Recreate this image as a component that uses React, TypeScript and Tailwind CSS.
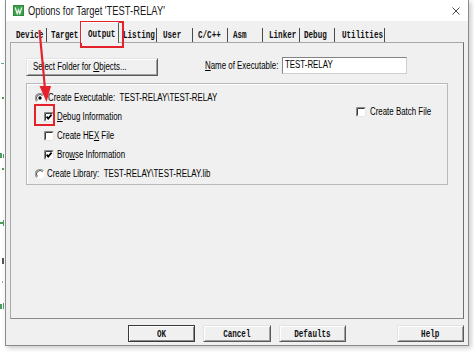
import React from "react";

const T = ({ children, className = "" }: { children: React.ReactNode; className?: string }) => (
  <span
    className={
      "inline-block whitespace-nowrap origin-left scale-x-[0.79] text-[10px] leading-[12px] text-black font-['Liberation_Sans',Arial,sans-serif] " +
      className
    }
  >
    {children}
  </span>
);

const M = ({ children, className = "" }: { children: React.ReactNode; className?: string }) => (
  <span
    className={
      "inline-block whitespace-nowrap scale-x-[0.69] text-[11px] leading-[12px] font-bold text-[#111] font-['Liberation_Mono','Courier_New',monospace] " +
      className
    }
  >
    {children}
  </span>
);

const Check = ({ checked }: { checked?: boolean }) => (
  <svg width="10" height="10" viewBox="0 0 10 10" className="shrink-0 block">
    <rect x="0" y="0" width="10" height="10" fill="#fff" />
    <path d="M0.5 9.5V0.5H9.5" stroke="#8a8a8a" fill="none" />
    <path d="M1.5 8.5V1.5H8.5" stroke="#3c3c3c" fill="none" />
    <path d="M0.5 9.5H9.5V0.5" stroke="#e6e6e6" fill="none" />
    {checked && <path d="M2.6 4.6 L4.2 6.6 L7.6 2.6" stroke="#000" strokeWidth="1.7" fill="none" />}
  </svg>
);

const Radio = ({ checked }: { checked?: boolean }) => (
  <svg width="10" height="10" viewBox="0 0 12 12" className="shrink-0 block">
    <circle cx="6" cy="6" r="5.5" fill="#fff" />
    <path d="M10 2.2 A5.3 5.3 0 0 0 2 10" stroke="#8a8a8a" strokeWidth="1.3" fill="none" />
    <path d="M9 3.2 A4.1 4.1 0 0 0 3 9" stroke="#3c3c3c" strokeWidth="1.1" fill="none" />
    {checked && <circle cx="6" cy="6" r="2" fill="#000" />}
  </svg>
);

const tabs = [
  { label: "Device", cls: "w-[35px] pl-[4px]" },
  { label: "Target", cls: "w-[34px] pl-[4px]" },
  { label: "Output", cls: "w-[38px] pl-[6px]", sel: true },
  { label: "Listing", cls: "w-[38px] pl-[4px]" },
  { label: "User", cls: "w-[36px] pl-[6px]" },
  { label: "C/C++", cls: "w-[35px] pl-[5px]" },
  { label: "Asm", cls: "w-[35px] pl-[5px]" },
  { label: "Linker", cls: "w-[37px] pl-[6px]" },
  { label: "Debug", cls: "w-[35px] pl-[4px]" },
  { label: "Utilities", cls: "w-[50px] pl-[7px]" },
];

const btnBase =
  "flex items-center justify-center border border-[#e3e3e3] border-r-[#5a5a5a] border-b-[#5a5a5a] shadow-[inset_1px_1px_0_#fff,inset_-1px_-1px_0_#a0a0a0] bg-[#f0f0f0]";

export default function App() {
  return (
    <div className="relative w-[474px] h-[353px] bg-white overflow-hidden flex leading-[12px]">
      {/* editor behind the dialog */}
      <div className="relative w-[5px] h-[353px] overflow-hidden">
        <div className="absolute left-[1px] top-[63px] w-[3px] h-[1px] bg-[#6fa87a]" />
        <div className="absolute left-[2px] top-[97px] w-[2px] h-[2px] bg-[#4c9a5c]" />
        <div className="absolute left-[0px] top-[153px] w-[2px] h-[5px] bg-[#4c9a5c]" />
        <div className="absolute left-[3px] top-[154px] w-[1px] h-[4px] bg-[#4c9a5c]" />
        <div className="absolute left-[2px] top-[168px] w-[2px] h-[2px] bg-[#4c9a5c]" />
        <div className="absolute left-[0px] top-[222px] w-[3px] h-[2px] bg-[#4c9a5c]" />
        <div className="absolute left-[3px] top-[220px] w-[1px] h-[6px] bg-[#4c9a5c]" />
        <div className="absolute left-[2px] top-[258px] w-[2px] h-[6px] bg-[#555]" />
        <div className="absolute left-[2px] top-[281px] w-[1px] h-[2px] bg-[#aaa]" />
        <div className="absolute left-[0px] top-[304px] w-[2px] h-[5px] bg-[#4c9a5c]" />
        <div className="absolute left-[3px] top-[303px] w-[1px] h-[6px] bg-[#4c9a5c]" />
      </div>

      {/* dialog window */}
      <div className="w-[464px] h-[346px] flex flex-col bg-[#f0f0f0] border-l border-r border-b border-[#8c8c8c] shadow-[2px_2px_5px_rgba(0,0,0,0.22)]">
        {/* title bar */}
        <div className="h-[21px] shrink-0 bg-white flex items-center">
          <svg width="11" height="11" viewBox="0 0 11 11" className="ml-[7px] shrink-0">
            <rect x="0" y="0" width="11" height="11" fill="#2f8a3c" />
            <rect x="1" y="1" width="9" height="9" fill="#3ea04c" />
            <path d="M2.2 2.5 L4.2 8.6 L5.5 5 L6.8 8.6 L8.8 2.5" stroke="#e8f5e6" strokeWidth="1.3" fill="none" />
          </svg>
          <span className="ml-[4px] inline-block whitespace-nowrap origin-left scale-x-[0.78] text-[12px] leading-[14px] text-[#1a1a1a] font-['Liberation_Sans',Arial,sans-serif]">
            Options for Target 'TEST-RELAY'
          </span>
          <svg width="8" height="8" viewBox="0 0 8 8" className="ml-auto mr-[8px] shrink-0">
            <path d="M0.5 0.5 L7.5 7.5 M7.5 0.5 L0.5 7.5" stroke="#333" strokeWidth="0.9" />
          </svg>
        </div>

        {/* tab strip */}
        <div className="h-[21px] shrink-0 flex items-end pl-[6px]">
          {tabs.map((t) =>
            t.sel ? (
              <div
                key={t.label}
                className={
                  "relative z-10 -mb-px h-[21px] flex items-center pt-[1px] bg-[#f0f0f0] border-l border-t border-r border-l-white border-t-white border-r-[#5a5a5a] " +
                  t.cls
                }
              >
                <M className="origin-left">{t.label}</M>
              </div>
            ) : (
              <div key={t.label} className={"h-[14px] flex items-center border-r border-[#4a4a4a] " + t.cls}>
                <M className="origin-left">{t.label}</M>
              </div>
            )
          )}
        </div>

        {/* tab panel */}
        <div className="ml-[4px] w-[454px] h-[277px] shrink-0 border border-[#a8a8a8] border-r-[#6e6e6e] border-b-[#8a8a8a] pl-[15px] pt-[14px]">
          <div className="flex items-start h-[19px]">
            <div className={"mt-px w-[132px] h-[18px] " + btnBase}>
              <T className="origin-center">
                Select Folder for <span className="underline">O</span>bjects...
              </T>
            </div>
            <div className="ml-[47px] w-[77px] mt-[3px] h-[12px] flex">
              <T>
                <span className="underline">N</span>ame of Executable:
              </T>
            </div>
            <div className="w-[125px] h-[17px] bg-white border border-[#828282] border-r-[#cfcfcf] border-b-[#cfcfcf] pl-[2px] pt-[1px] flex items-start">
              <T>TEST-RELAY</T>
            </div>
          </div>

          {/* group box */}
          <div className="mt-[7px] w-[422px] h-[102px] border border-[#b9b9b9] shadow-[inset_1px_1px_0_#fff] flex">
            <div className="w-[331px] pt-[4px] flex flex-col">
              <div className="h-[19px] flex items-center pl-[8px]">
                <Radio checked />
                <T className="ml-[3px]">Create Executable:&nbsp;&nbsp;TEST-RELAY\TEST-RELAY</T>
              </div>
              <div className="h-[19px] flex items-center pl-[17px]">
                <Check checked />
                <T className="ml-[3px]">
                  <span className="underline">D</span>ebug Information
                </T>
              </div>
              <div className="h-[19px] flex items-center pl-[17px]">
                <Check />
                <T className="ml-[3px]">
                  Create HE<span className="underline">X</span> File
                </T>
              </div>
              <div className="h-[19px] flex items-center pl-[17px]">
                <Check checked />
                <T className="ml-[3px]">
                  Bro<span className="underline">w</span>se Information
                </T>
              </div>
              <div className="h-[19px] flex items-center pl-[8px]">
                <Radio />
                <T className="ml-[2px]">Create Library:&nbsp;&nbsp;TEST-RELAY\TEST-RELAY.lib</T>
              </div>
            </div>
            <div className="pt-[18px]">
              <div className="h-[19px] flex items-center">
                <Check />
                <T className="ml-[4px]">Create Batch File</T>
              </div>
            </div>
          </div>
        </div>

        {/* bottom buttons */}
        <div className="mt-[6px] h-[17px] shrink-0 flex">
          <div className="ml-[122px] w-[67px] h-[17px] flex items-center justify-center border border-[#3a3a3a] shadow-[inset_1px_1px_0_#fff,inset_-1px_-1px_0_#8a8a8a]">
            <M className="origin-center">OK</M>
          </div>
          <div className={"ml-[8px] w-[68px] h-[17px] " + btnBase}>
            <M className="origin-center">Cancel</M>
          </div>
          <div className={"ml-[8px] w-[67px] h-[17px] " + btnBase}>
            <M className="origin-center">Defaults</M>
          </div>
          <div className={"ml-auto mr-[4px] w-[67px] h-[17px] " + btnBase}>
            <M className="origin-center">Help</M>
          </div>
        </div>
      </div>

      {/* annotations */}
      <div className="absolute left-[80px] top-[21px] w-[44px] h-[27px] border-2 border-[#e5222b]" />
      <div className="absolute left-[34px] top-[104px] w-[21px] h-[22px] border-2 border-[#e5222b]" />
      <svg className="absolute left-0 top-0 pointer-events-none" width="474" height="353" viewBox="0 0 474 353">
        <path d="M39.5 30 L45 89" stroke="#e5222b" strokeWidth="2.2" />
        <path d="M39.5 86 L51 86 L46.5 102 Z" fill="#e5222b" />
      </svg>
    </div>
  );
}
